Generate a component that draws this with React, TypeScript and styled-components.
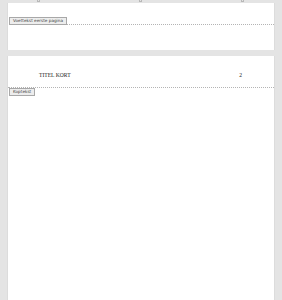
import styled, { createGlobalStyle } from 'styled-components';

const Global = createGlobalStyle`
  html, body {
    margin: 0;
    padding: 0;
    background: #e4e4e4;
    height: 100%;
    overflow: hidden;
  }
  #root {
    height: 100%;
  }
`;

const Desk = styled.div`
  display: flex;
  flex-direction: column;
  gap: 6px;
  padding: 0 8px;
  height: 100%;
  box-sizing: border-box;
`;

const PrevEdge = styled.div`
  height: 3px;
  margin-bottom: -6px;
  display: flex;
  justify-content: space-between;
  padding: 0 30px 0 29px;
`;

const Mark = styled.span`
  width: 3px;
  height: 2px;
  border: 1px solid #b8b8b8;
  border-top: none;
  box-sizing: border-box;
`;

const Page = styled.div<{ $grow?: boolean }>`
  background: #fff;
  display: flex;
  flex-direction: column;
  box-shadow: 1px 0 0 #dcdcdc, -1px 0 0 #dcdcdc;
  ${({ $grow }) => ($grow ? 'flex: 1;' : 'height: 47px;')}
`;

const FooterBar = styled.div`
  margin-top: 14px;
  display: flex;
  align-items: flex-end;
  height: 8px;
`;

const HeaderBar = styled.div`
  display: flex;
  flex-direction: column;
  align-items: flex-start;
`;

const Tab = styled.button`
  font-family: 'DejaVu Sans', 'Liberation Sans', sans-serif;
  font-size: 4.2px;
  line-height: 6px;
  color: #444;
  background: #ededed;
  border: 1px solid #a8a8a8;
  padding: 0 3px;
  margin: 0 0 0 1px;
  height: 8px;
  white-space: nowrap;
  cursor: pointer;
`;

const Dotted = styled.div`
  flex: 1;
  border-bottom: 1px dotted #b4b4b4;
`;

const HeaderLine = styled.div`
  align-self: stretch;
  border-bottom: 1px dotted #b4b4b4;
`;

const HeaderText = styled.div`
  display: flex;
  justify-content: space-between;
  align-items: baseline;
  padding: 16px 32px 9px 31px;
  font-family: 'Liberation Serif', 'DejaVu Serif', serif;
  font-size: 5.6px;
  color: #222;
`;

export default function App() {
  return (
    <>
      <Global />
      <Desk>
        <PrevEdge>
          <Mark />
          <Mark />
          <Mark />
        </PrevEdge>
        <Page>
          <FooterBar>
            <Tab>Voettekst eerste pagina</Tab>
            <Dotted />
          </FooterBar>
        </Page>
        <Page $grow>
          <HeaderText>
            <span>TITEL KORT</span>
            <span>2</span>
          </HeaderText>
          <HeaderBar>
            <HeaderLine />
            <Tab>Koptekst</Tab>
          </HeaderBar>
        </Page>
      </Desk>
    </>
  );
}
